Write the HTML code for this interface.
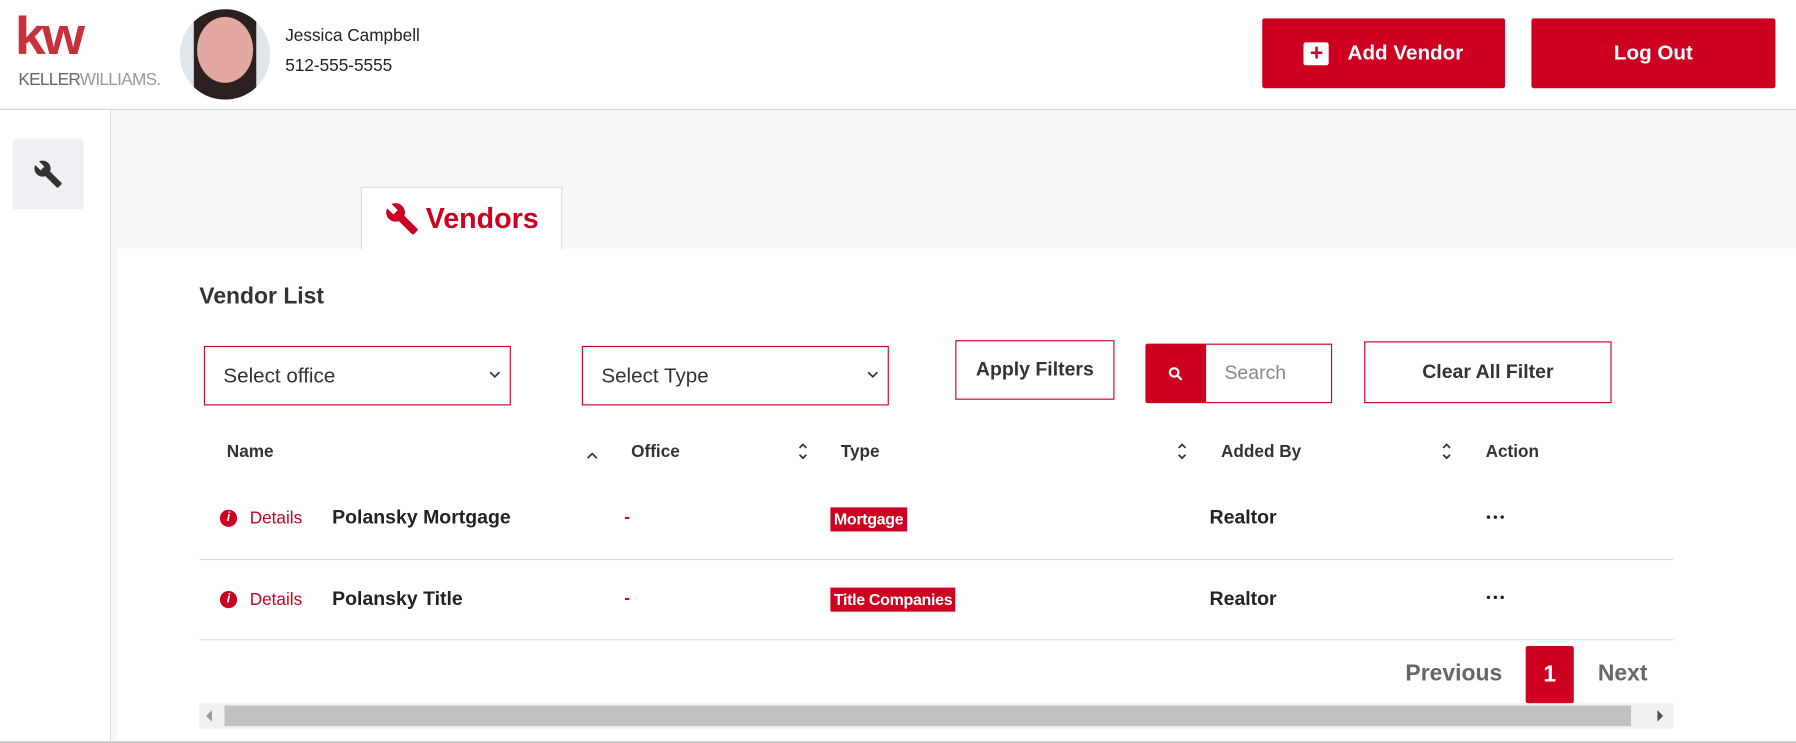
<!DOCTYPE html>
<html><head><meta charset="utf-8"><style>
*{box-sizing:border-box;margin:0;padding:0}
html,body{width:1796px;height:743px;overflow:hidden;background:#fff;font-family:"Liberation Sans",sans-serif;color:#333}
#w{position:absolute;left:0;top:0;width:1568px;height:649px;transform:scale(1.14541);transform-origin:0 0}
.a{position:absolute}
.red{color:#cd0020}
.btn{position:absolute;background:#cd0020;color:#fff;font-weight:bold;font-size:18px;display:flex;align-items:center;justify-content:center;border-radius:2px}
.sel{position:absolute;border:1px solid #cd0020;font-size:18px;color:#333;display:flex;align-items:center;padding-left:16px}
.sel .ch{position:absolute;right:8px;top:50%;margin-top:-4px;display:block;width:10px;height:7px}
.sel .ch svg{display:block}
.th{position:absolute;top:386px;font-size:15px;font-weight:bold;color:#333}
.b{font-weight:bold;font-size:17px;color:#222}
.badge{position:absolute;background:#cd0020;color:#fff;font-weight:bold;font-size:14px;padding:2px 3px;height:21px;line-height:17px;letter-spacing:-0.3px}
.hr{position:absolute;left:174px;width:1287px;height:1px;background:#ddd}
.dots{position:absolute;left:1298px;width:16px;height:4px}
.dots i{position:absolute;top:0;width:3px;height:3px;border-radius:50%;background:#222}
</style></head><body><div id="w">
<div class="a" style="left:0;top:95px;width:1568px;height:1px;background:#d6d6d6"></div>
<div class="a" style="left:13px;top:4px;font-size:46px;letter-spacing:-3px;color:#c8313b;font-weight:bold;transform:scaleX(1.05);transform-origin:0 0">kw</div>
<div class="a" style="left:16px;top:61px;font-size:15px;color:#777;letter-spacing:-0.6px"><span style="color:#666">KELLER</span><span style="color:#999">WILLIAMS.</span></div>
<div class="a" style="left:157px;top:8px;width:79px;height:79px;border-radius:50%;background:radial-gradient(ellipse 34% 40% at 50% 45%,#e3a8a0 0 90%,transparent 92%),linear-gradient(90deg,#dfe6ec 0 15%,#2a2020 16% 84%,#dfe6ec 85%);overflow:hidden"></div>
<div class="a" style="left:249px;top:23px;font-size:15px;color:#222">Jessica Campbell</div>
<div class="a" style="left:249px;top:49px;font-size:15px;color:#222">512-555-5555</div>
<div class="btn" style="left:1102px;top:16px;width:212px;height:61px"><span style="display:inline-block;width:22px;height:20px;background:#fff;border-radius:2px;color:#cd0020;font-size:20px;line-height:20px;text-align:center;margin-right:16px">+</span>Add Vendor</div>
<div class="btn" style="left:1337px;top:16px;width:213px;height:61px">Log Out</div>
<div class="a" style="left:96px;top:96px;width:1px;height:553px;background:#ddd"></div>
<div class="a" style="left:11px;top:121px;width:62px;height:62px;background:#eef0f4;border-radius:3px;display:flex;align-items:center;justify-content:center">
<svg width="26" height="26" viewBox="0 0 24 24"><path d="M22.7 19l-9.1-9.1c.9-2.3.4-5-1.5-6.9-2-2-5-2.4-7.4-1.3L9 6 6 9 1.6 4.7C.4 7.1.9 10.1 2.9 12.1c1.9 1.9 4.6 2.4 6.9 1.5l9.1 9.1c.4.4 1 .4 1.4 0l2.3-2.3c.5-.4.5-1.1.1-1.4z" fill="#333"/></svg></div>
<div class="a" style="left:97px;top:96px;width:1471px;height:553px;background:#f7f8fa"></div>
<div class="a" style="left:102px;top:217px;width:1466px;height:432px;background:#fff"></div>
<div class="a" style="left:315px;top:163px;width:176px;height:55px;background:#fff;border:1px solid #ddd;border-bottom:none;display:flex;align-items:center;justify-content:center;font-size:25px;font-weight:bold;color:#cd0020">
<svg width="30" height="30" viewBox="0 0 24 24" style="margin-right:6px"><path d="M22.7 19l-9.1-9.1c.9-2.3.4-5-1.5-6.9-2-2-5-2.4-7.4-1.3L9 6 6 9 1.6 4.7C.4 7.1.9 10.1 2.9 12.1c1.9 1.9 4.6 2.4 6.9 1.5l9.1 9.1c.4.4 1 .4 1.4 0l2.3-2.3c.5-.4.5-1.1.1-1.4z" fill="#cd0020"/></svg>Vendors</div>
<div class="a" style="left:174px;top:248px;font-size:20px;font-weight:bold;color:#333">Vendor List</div>
<div class="sel" style="left:178px;top:302px;width:268px;height:52px">Select office<span class="ch"><svg width="10" height="7"><path d="M1 1l4 4 4-4" stroke="#333" stroke-width="1.5" fill="none"/></svg></span></div>
<div class="sel" style="left:508px;top:302px;width:268px;height:52px">Select Type<span class="ch"><svg width="10" height="7"><path d="M1 1l4 4 4-4" stroke="#333" stroke-width="1.5" fill="none"/></svg></span></div>
<div class="sel" style="left:834px;top:297px;width:139px;height:52px;padding:0;justify-content:center;font-weight:bold;font-size:17px">Apply Filters</div>
<div class="a" style="left:1000px;top:300px;width:52px;height:52px;background:#cd0020;border-radius:2px 0 0 2px;display:flex;align-items:center;justify-content:center"><svg width="13" height="13" viewBox="0 0 14 14"><circle cx="5.5" cy="5.5" r="4" stroke="#fff" stroke-width="2" fill="none"/><path d="M8.5 8.5l4 4" stroke="#fff" stroke-width="2.2"/></svg></div>
<div class="sel" style="left:1052px;top:300px;width:111px;height:52px;color:#888;font-size:17px">Search</div>
<div class="sel" style="left:1191px;top:298px;width:216px;height:54px;padding:0;justify-content:center;font-weight:bold;font-size:17px">Clear All Filter</div>
<div class="th" style="left:198px">Name</div>
<div class="a" style="left:511px;top:389px"><svg width="12" height="8"><path d="M2 6l4-4 4 4" stroke="#333" stroke-width="1.5" fill="none"/></svg></div>
<div class="th" style="left:551px">Office</div>
<div class="a" style="left:695px;top:385px"><svg width="12" height="18"><path d="M3 6l3-3 3 3M3 12l3 3 3-3" stroke="#333" stroke-width="1.5" fill="none"/></svg></div>
<div class="th" style="left:734px">Type</div>
<div class="a" style="left:1026px;top:385px"><svg width="12" height="18"><path d="M3 6l3-3 3 3M3 12l3 3 3-3" stroke="#333" stroke-width="1.5" fill="none"/></svg></div>
<div class="th" style="left:1066px">Added By</div>
<div class="a" style="left:1257px;top:385px"><svg width="12" height="18"><path d="M3 6l3-3 3 3M3 12l3 3 3-3" stroke="#333" stroke-width="1.5" fill="none"/></svg></div>
<div class="th" style="left:1297px">Action</div>
<div class="a" style="left:192px;top:445px;width:15px;height:15px;border-radius:50%;background:#cd0020;color:#fff;font-size:11px;font-weight:bold;font-style:italic;text-align:center;line-height:15px">i</div>
<div class="a red" style="left:218px;top:444px;font-size:15px">Details</div>
<div class="a b" style="left:290px;top:442px">Polansky Mortgage</div>
<div class="a red" style="left:545px;top:443px;font-size:15px;font-weight:bold">-</div>
<div class="badge" style="left:725px;top:443px">Mortgage</div>
<div class="a b" style="left:1056px;top:442px">Realtor</div>
<div class="dots" style="top:450px"><i style="left:0"></i><i style="left:6px"></i><i style="left:12px"></i></div>
<div class="hr" style="top:488px"></div>
<div class="a" style="left:192px;top:516px;width:15px;height:15px;border-radius:50%;background:#cd0020;color:#fff;font-size:11px;font-weight:bold;font-style:italic;text-align:center;line-height:15px">i</div>
<div class="a red" style="left:218px;top:515px;font-size:15px">Details</div>
<div class="a b" style="left:290px;top:513px">Polansky Title</div>
<div class="a red" style="left:545px;top:514px;font-size:15px;font-weight:bold">-</div>
<div class="badge" style="left:725px;top:513px">Title Companies</div>
<div class="a b" style="left:1056px;top:513px">Realtor</div>
<div class="dots" style="top:520px"><i style="left:0"></i><i style="left:6px"></i><i style="left:12px"></i></div>
<div class="hr" style="top:558px"></div>
<div class="a" style="left:1227px;top:577px;font-size:20px;font-weight:bold;color:#666">Previous</div>
<div class="a" style="left:1332px;top:564px;width:42px;height:50px;background:#cd0020;border-radius:2px;color:#fff;font-size:20px;font-weight:bold;text-align:center;line-height:50px">1</div>
<div class="a" style="left:1395px;top:577px;font-size:20px;font-weight:bold;color:#666">Next</div>
<div class="a" style="left:174px;top:614px;width:1287px;height:22px;background:#f1f1f1"></div>
<div class="a" style="left:196px;top:616px;width:1228px;height:18px;background:#c1c1c1"></div>
<div class="a" style="left:180px;top:620px;width:0;height:0;border-top:5px solid transparent;border-bottom:5px solid transparent;border-right:5px solid #999"></div>
<div class="a" style="left:1447px;top:620px;width:0;height:0;border-top:5px solid transparent;border-bottom:5px solid transparent;border-left:5px solid #505050"></div>
<div class="a" style="left:0;top:647px;width:1568px;height:2px;background:#ccc"></div>
</div></body></html>
